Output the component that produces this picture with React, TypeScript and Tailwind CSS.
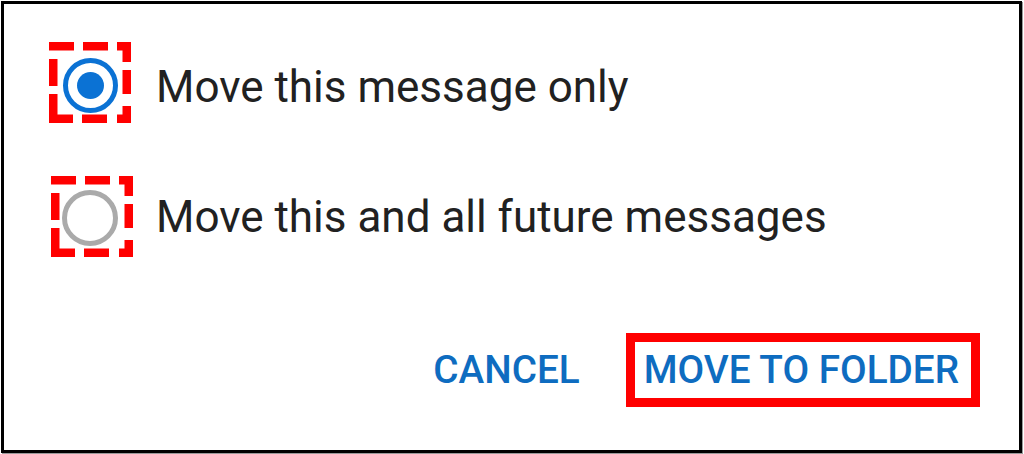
import React from "react";

function DashedBox({ children }: { children: React.ReactNode }) {
  const c = "#ff0000";
  return (
    <div className="relative w-[82px] h-[81px] flex items-center justify-center">
      <svg className="absolute inset-0" width="82" height="81" viewBox="0 0 82 81">
        {/* top */}
        <rect x="0" y="0" width="25" height="8.5" fill={c} />
        <rect x="34" y="0" width="25" height="8.5" fill={c} />
        <rect x="68" y="0" width="14" height="8.5" fill={c} />
        {/* right */}
        <rect x="73.5" y="0" width="8.5" height="20" fill={c} />
        <rect x="73.5" y="28" width="8.5" height="24" fill={c} />
        <rect x="73.5" y="64" width="8.5" height="17" fill={c} />
        {/* bottom */}
        <rect x="68" y="72.5" width="14" height="8.5" fill={c} />
        <rect x="33" y="72.5" width="25" height="8.5" fill={c} />
        <rect x="0" y="72.5" width="24" height="8.5" fill={c} />
        {/* left */}
        <rect x="0" y="52" width="8.5" height="29" fill={c} />
        <rect x="0" y="17" width="8.5" height="27" fill={c} />
      </svg>
      <div className="relative">{children}</div>
    </div>
  );
}

function Radio({ checked }: { checked: boolean }) {
  return (
    <div
      className={
        checked
          ? "w-[55px] h-[55px] rounded-full border-[5px] border-[#0b72d4] flex items-center justify-center"
          : "w-[56px] h-[56px] rounded-full border-[5px] border-[#aaaaaa] flex items-center justify-center"
      }
    >
      {checked && <div className="w-[27px] h-[27px] rounded-full bg-[#0b72d4]" />}
    </div>
  );
}

export default function App() {
  return (
    <div className="w-[1024px] h-[454px] bg-white pt-[1px] pl-[1px] overflow-hidden" style={{ fontFamily: "Roboto, 'Noto Sans', sans-serif" }}>
      <div className="w-[1021px] h-[452px] border-[3px] border-black bg-white shadow-[1px_1px_0_#9a9a9a] flex flex-col">
        <div className="flex items-center mt-[38px] ml-[45px]">
          <DashedBox>
            <div className="mt-[5px]">
              <Radio checked />
            </div>
          </DashedBox>
          <span className="ml-[25px] mt-[8px] text-[44px] leading-none text-[#212121]">Move this message only</span>
        </div>
        <div className="flex items-center mt-[53px] ml-[47px]">
          <DashedBox>
            <div className="-ml-[4px] mt-[2px]">
              <Radio checked={false} />
            </div>
          </DashedBox>
          <span className="ml-[23px] text-[44px] leading-none text-[#212121]">Move this and all future messages</span>
        </div>
        <div className="flex items-center justify-end mt-[76px] mr-[39px]">
          <span className="text-[38.7px] leading-none font-medium text-[#0e6cc0]">CANCEL</span>
          <div className="ml-[46px] h-[74px] border-[9px] border-[#ff0000] flex items-center pl-[9px] pr-[12px]">
            <span className="text-[38.7px] leading-none font-medium text-[#0e6cc0]">MOVE TO FOLDER</span>
          </div>
        </div>
      </div>
    </div>
  );
}
